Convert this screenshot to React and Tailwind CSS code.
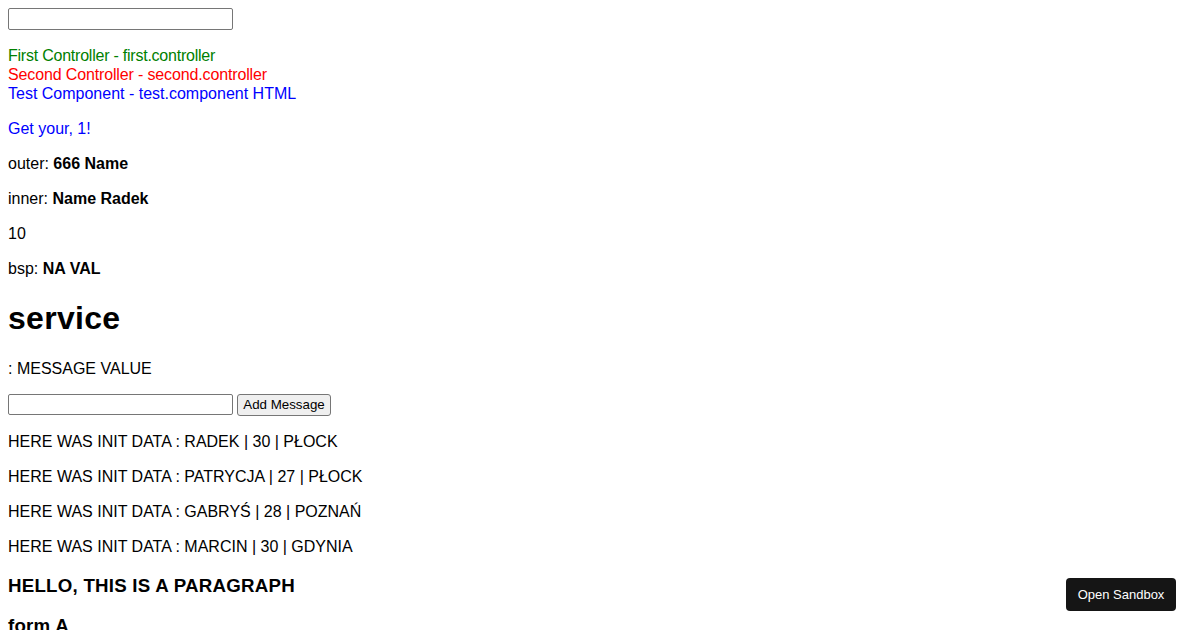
export default function App() {
  const rows = [
    ["RADEK", "30", "PŁOCK"],
    ["PATRYCJA", "27", "PŁOCK"],
    ["GABRYŚ", "28", "POZNAŃ"],
    ["MARCIN", "30", "GDYNIA"],
  ];
  return (
    <div className="m-[8px] text-[16px] leading-[19px] text-black font-['Liberation_Sans',Arial,sans-serif]">
      <div className="flex h-[22px] items-start">
        <input
          type="text"
          className="w-[225px] h-[22px] border border-[#767676] rounded-[2px] bg-white outline-none"
        />
      </div>
      <div className="my-4">
        <div className="text-[#008000] tracking-[-0.23px]">First Controller - first.controller</div>
        <div className="text-[#ff0000] tracking-[-0.14px]">Second Controller - second.controller</div>
        <div className="text-[#0000ff]">Test Component - test.component HTML</div>
      </div>
      <p className="my-4 text-[#0000ff]">Get your, 1!</p>
      <p className="my-4">
        outer: <b>666 Name</b>
      </p>
      <p className="my-4">
        inner: <b>Name Radek</b>
      </p>
      <p className="my-4">10</p>
      <p className="my-4">
        bsp: <b>NA VAL</b>
      </p>
      <h1 className="text-[32px] leading-[38px] font-bold tracking-[0.3px] my-[21.44px]">service</h1>
      <p className="my-4">: MESSAGE VALUE</p>
      <div className="flex h-[22px] items-start gap-[4px]">
        <input
          type="text"
          className="w-[225px] h-[21px] border border-[#767676] rounded-[2px] bg-white outline-none"
        />
        <button className="h-[22px] w-[94px] text-[13.33px] bg-[#efefef] border border-[#767676] rounded-[3px] leading-none">
          Add Message
        </button>
      </div>
      {rows.map(([n, a, c]) => (
        <p key={n} className="my-4">
          HERE WAS INIT DATA : {n} | {a} | {c}
        </p>
      ))}
      <h3 className="text-[18.72px] leading-[22px] font-bold tracking-[0.23px] my-[18.72px]">HELLO, THIS IS A PARAGRAPH</h3>
      <h3 className="text-[18.72px] leading-[22px] font-bold tracking-[0.23px] my-[18.72px]">form A</h3>
      <div className="h-[200px]" />
      <button className="fixed right-[24px] bottom-[19px] w-[110px] h-[33px] bg-[#151515] text-white text-[13px] rounded-[4px] font-['Liberation_Sans',Arial,sans-serif]">
        Open Sandbox
      </button>
    </div>
  );
}
